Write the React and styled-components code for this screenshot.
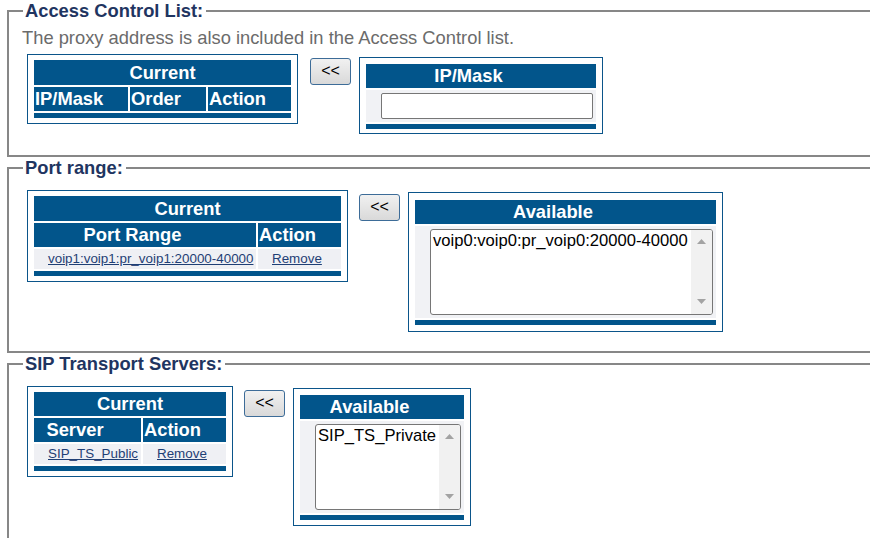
import React from 'react';
import styled, { createGlobalStyle } from 'styled-components';

const BLUE = '#02558b';

const GlobalStyle = createGlobalStyle`
  html, body { margin: 0; padding: 0; background: #fff; overflow: hidden; }
  body { font-family: "Liberation Sans", Arial, sans-serif; }
`;

const Page = styled.div`
  width: 1000px;
  padding-left: 7px;
`;

const Fieldset = styled.fieldset`
  margin: 0;
  border: 2px solid #878787;
  padding: 6px 0 ${(p) => p.$pb || 19}px 13px;
  min-width: 0;
`;

const Legend = styled.legend`
  margin-left: 1px;
  padding: 0 3px 0 2px;
  font-size: 18.33px;
  line-height: 21px;
  font-weight: bold;
  color: #1f3561;
`;

const Note = styled.p`
  margin: 0 0 6px;
  font-size: 18.33px;
  line-height: 21px;
  color: #6b6b6b;
`;

const Row = styled.div`
  display: flex;
  align-items: flex-start;
  padding-left: 5px;
  margin-top: ${(p) => p.$mt || 0}px;
`;

const Panel = styled.div`
  flex-shrink: 0;
  border: 1px solid #0b558a;
  padding: ${(p) => p.$pad || '3px 4px'};
  margin-top: ${(p) => p.$mt || 0}px;
  margin-left: ${(p) => p.$ml || 0}px;
  background: #fff;
`;

const Grid = styled.div`
  display: grid;
  grid-template-columns: ${(p) => p.$cols};
  gap: 2px;
  padding: 2px;
`;

const TitleCell = styled.div`
  grid-column: 1 / -1;
  background: ${BLUE};
  color: #fff;
  font-size: 18.33px;
  font-weight: bold;
  height: ${(p) => p.$h || 25}px;
  line-height: ${(p) => p.$h || 25}px;
  text-align: center;
  padding-right: ${(p) => p.$pr || 0}px;
`;

const ColHead = styled.div`
  background: ${BLUE};
  color: #fff;
  font-size: 18.33px;
  font-weight: bold;
  height: 24px;
  line-height: 24px;
  white-space: nowrap;
  text-align: ${(p) => p.$align || 'left'};
  padding-left: ${(p) => (p.$align === 'center' ? 0 : 1)}px;
  padding-right: ${(p) => p.$pr || 0}px;
`;

const DataCell = styled.div`
  background: #eff0f4;
  height: 20px;
  line-height: 20px;
  padding-left: 14px;
  font-size: 13.4px;
  white-space: nowrap;
`;

const Link = styled.a`
  color: #1f3f75;
  text-decoration: underline;
`;

const BodyCell = styled.div`
  grid-column: 1 / -1;
  background: #f1f2f5;
  padding: 3px 3px 3px 15px;
`;

const FooterBar = styled.div`
  grid-column: 1 / -1;
  height: 5px;
  background: ${BLUE};
`;

const MoveButton = styled.button`
  flex-shrink: 0;
  box-sizing: border-box;
  width: 41px;
  height: 27px;
  margin-left: ${(p) => p.$ml || 11}px;
  margin-top: 4px;
  padding: 0 0 2px;
  border: 1px solid #3d6c98;
  border-radius: 3px;
  background: linear-gradient(#f1f1f1, #d9d9d9);
  font-family: "Liberation Sans", Arial, sans-serif;
  font-size: 16px;
  color: #000;
`;

const TextInput = styled.input`
  display: block;
  box-sizing: border-box;
  width: 212px;
  height: 26px;
  margin: 0;
  border: 1px solid #767676;
  border-radius: 2px;
  background: #fff;
`;

const ListBox = styled.div`
  box-sizing: border-box;
  width: ${(p) => p.$w}px;
  height: 86px;
  border: 1px solid #767676;
  border-radius: 3px;
  background: #fff;
  display: flex;
  overflow: hidden;
`;

const Options = styled.div`
  flex: 1;
  padding: 1px 2px;
  font-size: 16.6px;
  line-height: 19px;
  color: #000;
  white-space: nowrap;
  overflow: hidden;
`;

const ScrollTrack = styled.div`
  width: 21px;
  flex-shrink: 0;
  background: #f1f1f1;
  display: flex;
  flex-direction: column;
  justify-content: space-between;
  align-items: center;
  padding: 9px 0 10px;
  box-sizing: border-box;
`;

const Arrow = ({ down }) => (
  <svg width="9" height="5" viewBox="0 0 9 5">
    <polygon points={down ? '0,0 9,0 4.5,5' : '0,5 9,5 4.5,0'} fill="#a3a3a3" />
  </svg>
);

const Select = ({ width, value }) => (
  <ListBox $w={width}>
    <Options>{value}</Options>
    <ScrollTrack>
      <Arrow />
      <Arrow down />
    </ScrollTrack>
  </ListBox>
);

export default function App() {
  return (
    <>
      <GlobalStyle />
      <Page>
        <Fieldset $pb={21}>
          <Legend>Access Control List:</Legend>
          <Note>The proxy address is also included in the Access Control list.</Note>
          <Row>
            <Panel>
              <Grid $cols="94px 76px 83px">
                <TitleCell>Current</TitleCell>
                <ColHead>IP/Mask</ColHead>
                <ColHead>Order</ColHead>
                <ColHead>Action</ColHead>
                <FooterBar />
              </Grid>
            </Panel>
            <MoveButton $ml={12}>&lt;&lt;</MoveButton>
            <Panel $ml={8} $mt={3} $pad="4px 4px 2px">
              <Grid $cols="230px">
                <TitleCell $h={24} $pr={25}>IP/Mask</TitleCell>
                <BodyCell>
                  <TextInput type="text" />
                </BodyCell>
                <FooterBar />
              </Grid>
            </Panel>
          </Row>
        </Fieldset>

        <Fieldset $pb={19}>
          <Legend>Port range:</Legend>
          <Row $mt={6}>
            <Panel>
              <Grid $cols="222px 83px">
                <TitleCell>Current</TitleCell>
                <ColHead $align="center" $pr={25}>Port Range</ColHead>
                <ColHead>Action</ColHead>
                <DataCell>
                  <Link href="#">voip1:voip1:pr_voip1:20000-40000</Link>
                </DataCell>
                <DataCell>
                  <Link href="#">Remove</Link>
                </DataCell>
                <FooterBar />
              </Grid>
            </Panel>
            <MoveButton>&lt;&lt;</MoveButton>
            <Panel $ml={8} $mt={2} $pad="5px 4px 4px">
              <Grid $cols="301px">
                <TitleCell $h={24} $pr={25}>Available</TitleCell>
                <BodyCell>
                  <Select width={283} value="voip0:voip0:pr_voip0:20000-40000" />
                </BodyCell>
                <FooterBar />
              </Grid>
            </Panel>
          </Row>
        </Fieldset>

        <Fieldset $pb={19}>
          <Legend>SIP Transport Servers:</Legend>
          <Row $mt={6}>
            <Panel>
              <Grid $cols="107px 83px">
                <TitleCell $h={24}>Current</TitleCell>
                <ColHead $align="center" $pr={25}>Server</ColHead>
                <ColHead>Action</ColHead>
                <DataCell>
                  <Link href="#">SIP_TS_Public</Link>
                </DataCell>
                <DataCell>
                  <Link href="#">Remove</Link>
                </DataCell>
                <FooterBar />
              </Grid>
            </Panel>
            <MoveButton>&lt;&lt;</MoveButton>
            <Panel $ml={8} $mt={2} $pad="4px 4px 3px">
              <Grid $cols="164px">
                <TitleCell $h={24} $pr={25}>Available</TitleCell>
                <BodyCell>
                  <Select width={146} value="SIP_TS_Private" />
                </BodyCell>
                <FooterBar />
              </Grid>
            </Panel>
          </Row>
        </Fieldset>
      </Page>
    </>
  );
}
